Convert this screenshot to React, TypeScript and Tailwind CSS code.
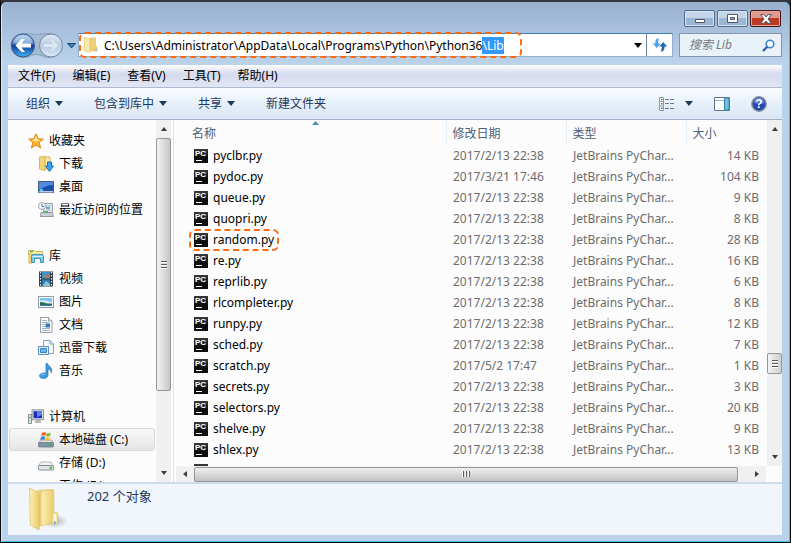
import { useEffect, useRef } from 'react';

const PATH = 'C:\\Users\\Administrator\\AppData\\Local\\Programs\\Python\\Python36\\Lib';

const FILES = [
  { name: 'pyclbr.py', date: '2017/2/13 22:38', size: '14 KB' },
  { name: 'pydoc.py', date: '2017/3/21 17:46', size: '104 KB' },
  { name: 'queue.py', date: '2017/2/13 22:38', size: '9 KB' },
  { name: 'quopri.py', date: '2017/2/13 22:38', size: '8 KB' },
  { name: 'random.py', date: '2017/2/13 22:38', size: '28 KB', marked: true },
  { name: 're.py', date: '2017/2/13 22:38', size: '16 KB' },
  { name: 'reprlib.py', date: '2017/2/13 22:38', size: '6 KB' },
  { name: 'rlcompleter.py', date: '2017/2/13 22:38', size: '8 KB' },
  { name: 'runpy.py', date: '2017/2/13 22:38', size: '12 KB' },
  { name: 'sched.py', date: '2017/2/13 22:38', size: '7 KB' },
  { name: 'scratch.py', date: '2017/5/2 17:47', size: '1 KB' },
  { name: 'secrets.py', date: '2017/2/13 22:38', size: '3 KB' },
  { name: 'selectors.py', date: '2017/2/13 22:38', size: '20 KB' },
  { name: 'shelve.py', date: '2017/2/13 22:38', size: '9 KB' },
  { name: 'shlex.py', date: '2017/2/13 22:38', size: '13 KB' },
  { name: '', date: '', size: '' },
];

const Svg = ({ children, size = 16 }) => (
  <svg width={size} height={size} viewBox="0 0 16 16" fill="none" className="shrink-0" aria-hidden="true">
    {children}
  </svg>
);

const StarIcon = () => (
  <Svg>
    <path d="M8 .8l2 5 5.3.3-4.1 3.5 1.4 5.4L8 12l-4.6 3 1.4-5.4L.7 6.1 6 5.8z" fill="#ffb638" stroke="#e08414" />
    <path d="M8 3l1.300 3.600 3.500.3L8 8.400 3.200 6.900l3.500-.3z" fill="#ffe9a0" />
  </Svg>
);

const DownloadIcon = () => (
  <Svg>
    <path d="M1.500 1l5.500-.5v14L1.500 13z" fill="#f3d679" stroke="#d8b65a" />
    <path d="M7 1h5v12H7z" fill="#fbeaa9" stroke="#d8b65a" />
    <path d="M9.500 6h4v4h2l-4 5.500L7.500 10h2z" fill="#3ba5ea" stroke="#1b6fb5" />
  </Svg>
);

const DesktopIcon = () => (
  <Svg>
    <rect x=".5" y="2.500" width="15" height="11" fill="#1f4fae" stroke="#4b5f80" />
    <path d="M1 3h14v3C10 6 5 8 1 11z" fill="#4f8ce0" />
    <path d="M1 12h14v1.500H1z" fill="#b8cbe4" />
    <path d="M2 10h3v2H2z" fill="#55c7f5" />
  </Svg>
);

const RecentIcon = () => (
  <Svg>
    <path d="M5.500 1.500h9v9h-9z" fill="#e4eaef" stroke="#98a4b0" />
    <path d="M3 10.500h11l1.500 4h-13z" fill="#c9d0d6" stroke="#8e99a4" />
    <path d="M8 4h5M8 8h5" stroke="#a9b6c2" />
    <path d="M8 6h4" stroke="#4a95cf" strokeWidth="1.500" />
    <path d="M6 10h4" stroke="#3ca552" strokeWidth="1.500" />
    <circle cx="4" cy="4" r="3.500" fill="#f5f8fb" stroke="#98a4b0" />
    <path d="M4 2v2.500h2" stroke="#65707c" />
  </Svg>
);

const LibraryIcon = () => (
  <Svg>
    <path d="M.5 2.500h6l1 1h7v3h-14z" fill="#fbe9a2" stroke="#d4b65c" />
    <path d="M2 3.500h3" stroke="#53b452" strokeWidth="1.500" />
    <path d="M1 6h3v9H1z" fill="#f6d775" stroke="#d4b65c" />
    <path d="M3.500 14.500v-6q0-2 2-2h8q2 0 2 2v6h-3v-4h-6v4z" fill="#82cbe9" stroke="#3c93ba" />
    <path d="M4.500 8.500h10" stroke="#d6f1fb" />
  </Svg>
);

const VideoIcon = () => (
  <Svg>
    <path d="M1 .5h14v15H1z" fill="#2f3a42" />
    <path d="M4 1h8v6.500H4z" fill="#3a93cd" />
    <path d="M4 8.500h8V15H4z" fill="#2c7bb8" />
    <path d="M4 2l4 3 4-2v3L8 7.500z" fill="#c4744d" />
    <path d="M5 14l3-4 4 3v2H5z" fill="#81c5d9" />
    <path d="M2.500 1v14M13.500 1v14" stroke="#e8eef2" strokeWidth="1.200" strokeDasharray="1.500 1.500" />
  </Svg>
);

const PictureIcon = () => (
  <Svg>
    <rect x=".5" y="2.500" width="15" height="11" fill="#fff" stroke="#8e9aa5" />
    <path d="M2 4h12v8H2z" fill="#7cc4ee" />
    <path d="M2 7c4-2 8 1 12 1v2H2z" fill="#d9eef5" />
    <path d="M2 8c3-.5 6 2 12 1.500V12H2z" fill="#2c6c58" />
    <path d="M2 11h12v1H2z" fill="#317fb5" />
  </Svg>
);

const DocumentIcon = () => (
  <Svg>
    <path d="M2.500.5h8l3.500 3.500v11.500H2.500z" fill="#fff" stroke="#929ca6" />
    <path d="M10.500.5V4H14" fill="#e8edf1" stroke="#929ca6" />
    <path d="M4 3.500h5M4 5.500h7M4 7.500h3M4 9.500h3M4 11.500h8M4 13.500h8" stroke="#9db0c0" />
    <path d="M7.500 6.500h4.500v4H7.500z" fill="#3678bd" />
  </Svg>
);

const ThunderIcon = () => (
  <Svg>
    <path d="M5.500.5H12L15.500 4v9.500h-10z" fill="#f4f9fd" stroke="#7fa2c0" />
    <path d="M12 .5V4h3.500" stroke="#7fa2c0" />
    <path d="M.5 6.500h10v8H.5z" fill="#e3f1fb" stroke="#5c8fc0" />
    <path d="M2.500 8.500h6v4h-6z" fill="#62b5ed" stroke="#3b83c4" />
  </Svg>
);

const MusicIcon = () => (
  <Svg>
    <path d="M8 .5h1.500c.5 2.500 5.500 3.500 3.800 9.300-.3-2-1.300-3.300-3.300-3.800V12c0 2-2 3.500-4.500 3.500S1.200 14 1.500 12.500C2 10.500 5 9.500 8 10.200z" fill="#3b9ee5" stroke="#1e6eb3" strokeWidth=".7" />
    <path d="M3 12.500c.8-1 2-1.500 3.500-1.300" stroke="#a9dbfa" />
  </Svg>
);

const ComputerIcon = () => (
  <Svg>
    <path d="M.5 5.500h3v9h-3z" fill="#d9dde0" stroke="#8b9197" />
    <path d="M1 8.500h2" stroke="#4fb848" />
    <path d="M4 .8h11.500v10H4z" fill="#dfe2e5" stroke="#8b9197" />
    <path d="M5.500 2.200h8.500v7H5.500z" fill="#1c2fbb" />
    <path d="M9 2.200h5V6L9 8z" fill="#5c84ee" />
    <path d="M8 11h4l1.500 3H6.500z" fill="#b4b9be" />
  </Svg>
);

const DriveIcon = ({ windows = false }) => (
  <Svg>
    {windows ? (
      <path d="M2.500 8h11l2 3.500H.5z" fill="#dfe6ea" stroke="#8b99a4" strokeWidth=".8" />
    ) : (
      <path d="M3 7h10l2.500 3.500H.5z" fill="#f1f2f3" stroke="#a5a9ad" strokeWidth=".8" />
    )}
    <rect x=".5" y="10.500" width="15" height="4.500" rx="1" fill={windows ? '#7b95a6' : '#e3e5e6'} stroke="#6f777e" strokeWidth=".8" />
    <path d="M11.500 12.800h2.500" stroke="#35b83a" strokeWidth="2" />
    {windows && (
      <>
        <path d="M4 .8Q6-.4 8.200.6L7.400 3.800Q5.200 2.800 3.200 4z" fill="#ee5a24" />
        <path d="M8.900.9q2 .9 4-.2L12 4q-2 .9-4 .1z" fill="#7cbc2c" />
        <path d="M3 4.800Q5.200 3.600 7.200 4.800L6.400 8Q4.200 7 2.200 8.100z" fill="#3a86d8" />
        <path d="M7.900 5q2 .9 4-.1L11.200 8.300q-2 .8-4 0z" fill="#fcc419" />
      </>
    )}
  </Svg>
);

const PyIcon = () => (
  <svg width="14" height="14" viewBox="0 0 14 14" className="shrink-0" aria-hidden="true">
    <defs>
      <linearGradient id="py" x2="0" y2="1">
        <stop offset="0" stopColor="#3a3a3a" />
        <stop offset=".6" stopColor="#0e0e0e" />
      </linearGradient>
    </defs>
    <rect width="14" height="14" fill="url(#py)" />
    <text x="1" y="7" fontSize="8" fontWeight="700" fill="#fff" className="font-['Liberation_Sans',sans-serif]">PC</text>
    <path d="M2 11.500h6" stroke="#fff" />
  </svg>
);

const FolderIcon = ({ className }) => (
  <svg viewBox="0 0 40 46" className={className} aria-hidden="true">
    <defs>
      <linearGradient id="folder" x1="0" x2="1">
        <stop offset="0" stopColor="#fdf0b4" />
        <stop offset="1" stopColor="#e9cc6b" />
      </linearGradient>
      <radialGradient id="shade">
        <stop offset="0" stopColor="#7e8894" stopOpacity=".6" />
        <stop offset="1" stopColor="#7e8894" stopOpacity="0" />
      </radialGradient>
    </defs>
    <ellipse cx="27" cy="35" rx="13" ry="7" fill="url(#shade)" />
    <path d="M9 3l16-1 1 24 3 1v10l-18 3z" fill="#ecd37b" />
    <path d="M13 4l13-1v33l-13 4z" fill="url(#folder)" stroke="#dcc069" strokeWidth=".6" />
    <path d="M1 1l10 5v38L2 39z" fill="url(#folder)" stroke="#d6b95c" strokeWidth=".6" />
    <path d="M24 28q3-4 6-1v10l-6 1z" fill="#f7e596" stroke="#d6b95c" strokeWidth=".6" />
    <path d="M27 28v7" stroke="#fff" strokeWidth="1.500" />
    <path d="M27 35v3" stroke="#54a8da" strokeWidth="1.500" />
  </svg>
);

const SmallFolderIcon = () => (
  <svg width="14" height="16" viewBox="0 0 14 16" className="ml-[5px] shrink-0" aria-hidden="true">
    <path d="M6 1h5.500v13H6z" fill="#ecd180" stroke="#dcc069" strokeWidth=".6" />
    <path d="M.5.500L6 2v13.500L.5 14z" fill="#fae9a6" stroke="#d9bd62" strokeWidth=".6" />
    <path d="M10.500 9.500h2.500v4.500h-2.500z" fill="#f7e596" stroke="#d6b95c" strokeWidth=".6" />
    <path d="M12 11.500v2" stroke="#54a8da" />
  </svg>
);

const Caret = ({ className = '' }) => (
  <svg width="8" height="5" viewBox="0 0 8 5" className={`shrink-0 fill-current ${className}`} aria-hidden="true">
    <path d="M0 0h8L4 5z" />
  </svg>
);

const NAV = [
  [
    { label: '收藏夹', icon: <StarIcon /> },
    { label: '下载', icon: <DownloadIcon /> },
    { label: '桌面', icon: <DesktopIcon /> },
    { label: '最近访问的位置', icon: <RecentIcon /> },
  ],
  [
    { label: '库', icon: <LibraryIcon /> },
    { label: '视频', icon: <VideoIcon /> },
    { label: '图片', icon: <PictureIcon /> },
    { label: '文档', icon: <DocumentIcon /> },
    { label: '迅雷下载', icon: <ThunderIcon /> },
    { label: '音乐', icon: <MusicIcon /> },
  ],
  [
    { label: '计算机', icon: <ComputerIcon /> },
    { label: '本地磁盘 (C:)', icon: <DriveIcon windows />, active: true },
    { label: '存储 (D:)', icon: <DriveIcon /> },
    { label: '工作 (E:)', icon: <DriveIcon /> },
  ],
];

const WindowButtons = () => (
  <div className="flex justify-end gap-0.5 pr-px">
    <button aria-label="最小化" className="flex h-[17px] w-[31px] items-center justify-center rounded-xs border border-[#56698a] bg-linear-to-b from-[#c3d5e9] from-50% to-[#9cb7d3] to-50% shadow-[inset_0_0_0_1px_#d5e4f3]">
      <svg width="12" height="13" viewBox="0 0 12 13"><path d="M1.500 7.500h9v3h-9z" fill="#fff" stroke="#535666" /></svg>
    </button>
    <button aria-label="最大化" className="flex h-[17px] w-[31px] items-center justify-center rounded-xs border border-[#56698a] bg-linear-to-b from-[#c3d5e9] from-50% to-[#9cb7d3] to-50% shadow-[inset_0_0_0_1px_#d5e4f3]">
      <svg width="11" height="9" viewBox="0 0 11 9"><path d="M.5.5h10v8H.5z" fill="#fff" stroke="#535666" /><path d="M3.500 3.500h4v2h-4z" fill="#9cb7d3" stroke="#535666" /></svg>
    </button>
    <button aria-label="关闭" className="flex h-[17px] w-[31px] items-center justify-center rounded-xs border border-[#43141a] bg-linear-to-b from-[#dd9a8e] from-50% to-[#bd3a22] to-50% shadow-[inset_0_0_0_1px_#e3a79b]">
      <svg width="12" height="10" viewBox="0 0 12 10"><path d="M.7.7h3.400L6 3 7.900.7h3.400L8 5l3.300 4.300H7.900L6 7 4.100 9.300H.7L4 5z" fill="#fff" stroke="#535666" /></svg>
    </button>
  </div>
);

const NavButtons = () => (
  <svg width="70" height="28" viewBox="0 0 70 28" className="shrink-0" aria-hidden="true">
    <defs>
      <linearGradient id="back" x2="0" y2="1">
        <stop offset="0" stopColor="#a9cdf0" />
        <stop offset=".45" stopColor="#3d72c1" />
        <stop offset=".5" stopColor="#12399a" />
        <stop offset="1" stopColor="#3fb5f2" />
      </linearGradient>
      <linearGradient id="fwd" x2="0" y2="1">
        <stop offset="0" stopColor="#e0eaf4" />
        <stop offset=".5" stopColor="#b9cde2" />
        <stop offset="1" stopColor="#d9e8f6" />
      </linearGradient>
    </defs>
    <path d="M15 2.500c8 0 8 1 13.500 1s5.500-1 13.500-1a12 12 0 010 24c-8 0-8-3-13.500-3S23 26.500 15 26.500a12 12 0 010-24z" fill="#a3bad4" stroke="#849fbd" />
    <circle cx="15" cy="14.500" r="11.500" fill="url(#back)" stroke="#3e5684" />
    <path d="M5 11.500a10.500 10.500 0 0120 0q-10 4-20 0z" fill="#fff" opacity=".35" />
    <path d="M7.500 14.500l6-6.500H17l-3.500 4.500H23v4h-9.500L17 21h-3.500z" fill="#fff" />
    <circle cx="43" cy="14.500" r="11.500" fill="url(#fwd)" stroke="#7389a6" />
    <path d="M50.500 14.500l-6-6.500H41l3.500 4.500H35v4h9.500L41 21h3.500z" fill="#dbe7f2" stroke="#b2c5d9" strokeWidth=".6" />
    <path d="M59.500 12.500h8l-4 4.500z" fill="#2e86c2" stroke="#22466f" />
  </svg>
);

const AddressBar = () => {
  const ref = useRef<HTMLInputElement>(null);

  useEffect(() => {
    ref.current?.focus();
    ref.current?.setSelectionRange(PATH.length - 4, PATH.length);
  }, []);

  return (
    <div className="relative flex h-6 flex-1 items-center border border-[#8fb0cf] border-t-[#3f7cae] bg-white">
      <SmallFolderIcon />
      <input
        ref={ref}
        aria-label="地址"
        defaultValue={PATH}
        className="ml-1.5 min-w-0 flex-1 bg-transparent leading-[17px] text-black outline-none selection:bg-[#3399ff] selection:text-white"
      />
      <button aria-label="历史记录" className="px-1 text-black"><Caret /></button>
      <button aria-label="刷新" className="flex h-full w-[26px] items-center justify-center border-l border-[#6f8299]">
        <svg width="16" height="16" viewBox="0 0 16 16">
          <path d="M6.800 1.200C3.500 1.500 3.300 4 3.300 6.500H.8L4.800 11l4-4.500H6.200c0-2 0-3.800.6-5.300z" fill="#4aa3e3" />
          <path d="M8.700 14.800c3.300-.3 3.900-2.800 3.900-5.300h2.600l-4-4.500-4 4.500h2.600c0 2-.5 3.800-1.100 5.300z" fill="#2767b0" />
        </svg>
      </button>
      <span className="pointer-events-none absolute -top-0.5 left-0 h-[26px] w-[443px] rounded-md border-2 border-dashed border-[#ff6a0c]" />
    </div>
  );
};

const Toolbar = () => (
  <div className="flex h-8 shrink-0 items-center gap-[31px] border-b border-[#a0afc3] bg-linear-to-b from-[#fafdff] via-[#e6f0fa] via-50% to-[#dce6f4] pr-[15px] pl-[18px] text-[#1e395b]">
    <button className="flex items-center gap-[5px]">组织<Caret /></button>
    <button className="flex items-center gap-[5px]">包含到库中<Caret /></button>
    <button className="flex items-center gap-[5px]">共享<Caret /></button>
    <button>新建文件夹</button>
    <div className="ml-auto flex items-center gap-[21px]">
      <button aria-label="更改视图" className="flex items-center gap-2.5">
        <svg width="16" height="14" viewBox="0 0 16 14">
          <path d="M.5.5h4v13h-4z" fill="#fff" stroke="#8f9bab" />
          <path d="M1 4.500h3M1 9h3" stroke="#8f9bab" />
          <path d="M2 2.500h1.500" stroke="#2d7d46" strokeWidth="1.500" />
          <path d="M2 6.800h1.500" stroke="#d0421b" strokeWidth="1.500" />
          <path d="M2 11.300h1.500" stroke="#2f6ab5" strokeWidth="1.500" />
          <path d="M6 2.500h10M6 6.500h10M6 11.500h10" stroke="#6c7c92" strokeDasharray="4 1" />
        </svg>
        <Caret />
      </button>
      <button aria-label="预览窗格">
        <svg width="16" height="14" viewBox="0 0 16 14">
          <path d="M.5.5h15v13H.5z" fill="#fff" stroke="#5c7390" />
          <path d="M1 3.500h9" stroke="#9fb0c4" />
          <path d="M10.500 1v12h4.500V1z" fill="#6fc0dd" stroke="#3c87a8" />
        </svg>
      </button>
      <button aria-label="帮助">
        <svg width="16" height="16" viewBox="0 0 16 16">
          <circle cx="8" cy="8" r="7.200" fill="#2546b0" stroke="#8b929c" strokeWidth="1.500" />
          <path d="M2.500 7a5.500 5.500 0 0111 0q-5 2-11 0z" fill="#6b8de0" opacity=".7" />
          <text x="8" y="12" fontSize="12" fontWeight="700" textAnchor="middle" fill="#fff" className="font-['Liberation_Sans',sans-serif]">?</text>
        </svg>
      </button>
    </div>
  </div>
);

const Sidebar = () => (
  <nav className="flex w-[166px] shrink-0 border-r border-[#d6e5f5]">
    <div className="min-w-0 flex-1 space-y-[23px] overflow-hidden pt-[9px] pl-px">
      {NAV.map((group) => (
        <div key={group[0].label}>
          {group.map((item, i) => (
            <button
              key={item.label}
              className={`flex h-[23px] w-[146px] items-center gap-[5px] rounded-[3px] border whitespace-nowrap ${
                i === 0 ? 'pl-[18px]' : 'pl-7'
              } ${item.active ? 'border-[#d9d9d9] bg-linear-to-b from-[#f8f8f8] to-[#e5e5e5]' : 'border-transparent'}`}
            >
              {item.icon}
              {item.label}
            </button>
          ))}
        </div>
      ))}
    </div>
    <div className="mr-0.5 flex w-[15px] flex-col items-center bg-[#f0f0f0]">
      <Arrow className="my-[6px] rotate-180" />
      <div className="flex h-[253px] w-full items-center justify-center rounded-xs border border-[#979797] bg-linear-to-r from-[#f3f3f3] to-[#c6c6c8]">
        <Grip />
      </div>
      <Arrow className="mt-auto mb-1.5" />
    </div>
  </nav>
);

const Arrow = ({ className = '' }) => (
  <svg width="6" height="6" viewBox="0 0 6 6" className={`shrink-0 ${className}`} aria-hidden="true">
    <path d="M0 1h6L3 5z" fill="#3c3c3c" />
  </svg>
);

const Grip = ({ className = '' }) => (
  <svg width="8" height="8" viewBox="0 0 8 8" className={className} aria-hidden="true">
    <path d="M1 .5h6M1 3.500h6M1 6.500h6" stroke="#5a5a5a" />
    <path d="M1 1.500h6M1 4.500h6M1 7.500h6" stroke="#fff" />
  </svg>
);

const FileTable = () => (
  <table className="w-full table-fixed border-collapse text-left whitespace-nowrap">
    <thead>
      <tr className="h-[25px] text-[#4c607a]">
        <th className="relative pt-0.5 pb-0 pl-1.5 font-normal">
          名称
          <svg width="7" height="4" viewBox="0 0 7 4" className="absolute top-px left-1/2 -ml-1" aria-hidden="true">
            <path d="M0 4l3.500-4L7 4z" fill="#4a90b8" />
          </svg>
        </th>
        {['修改日期', '类型'].map((title) => (
          <th key={title} className="w-[120px] border-l border-[#e3edf7] pt-0.5 pb-0 pl-1.5 font-normal">{title}</th>
        ))}
        <th className="w-[81px] border-l border-[#e3edf7] pt-0.5 pb-0 pl-1.5 font-normal">大小</th>
      </tr>
    </thead>
    <tbody>
      {FILES.map((file) => (
        <tr key={file.name} className="h-[21px] text-[#6d6d6d]">
          <td className="py-0 pl-2 text-black">
            <div className="relative flex w-fit items-center gap-[5px]">
              <PyIcon />
              {file.name}
              {file.marked && (
                <span className="absolute -inset-x-[5px] -inset-y-[3px] rounded-md border-2 border-dashed border-[#ff6a0c]" />
              )}
            </div>
          </td>
          <td className="py-0 pl-[7px]">{file.date}</td>
          <td className="py-0 pl-[7px]">{file.name && 'JetBrains PyChar...'}</td>
          <td className="py-0 pr-2 text-right">{file.size}</td>
        </tr>
      ))}
    </tbody>
  </table>
);

const FilePane = () => (
  <main className="flex min-w-0 flex-1 flex-col">
    <div className="flex min-h-0 flex-1">
      <div className="min-w-0 flex-1 overflow-hidden pl-3">
        <FileTable />
      </div>
      <div className="flex w-[15px] flex-col items-center bg-[#f0f0f0]">
        <Arrow className="my-1.5 rotate-180" />
        <div className="mt-auto flex h-[21px] w-full items-center justify-center rounded-xs border border-[#979797] bg-linear-to-r from-[#f3f3f3] to-[#cfcfd1]">
          <Grip />
        </div>
        <Arrow className="mt-20 mb-1.5" />
      </div>
    </div>
    <div className="mr-4 ml-0.5 flex h-4 shrink-0 items-center bg-[#f0f0f0]">
      <Arrow className="mx-1.5 rotate-90" />
      <div className="flex h-[15px] flex-1 items-center justify-center rounded-xs border border-[#979797] bg-linear-to-b from-[#f0f0f0] to-[#c2c2c4]">
        <Grip className="rotate-90" />
      </div>
      <Arrow className="mr-1.5 ml-4 -rotate-90" />
    </div>
  </main>
);

export default function App() {
  return (
    <div className="h-screen border border-t-2 border-[#0b0b0f] border-t-[#33353f] bg-[#33353f] font-['Noto_Sans','Noto_Sans_CJK_SC',sans-serif] text-[12px] leading-4 text-black">
      <div className="flex h-full flex-col rounded-t-md border border-t-0 border-[#3cc3e0] border-l-[#dbe9f6] bg-[#bbd2eb] bg-linear-to-b from-[#98b1cf] to-[#bbd2eb] to-[60px] pt-2 pr-[7px] pb-1.5 pl-1.5">
        <WindowButtons />
        <div className="mt-1 mb-1.5 flex items-center">
          <NavButtons />
          <AddressBar />
          <label className="ml-1.5 flex h-6 w-[103px] items-center border border-[#8195ad] bg-[#e9f1f9] pr-1.5 pl-[9px]">
            <input
              type="search"
              aria-label="搜索 Lib"
              placeholder="搜索 Lib"
              className="w-full min-w-0 italic outline-none placeholder:text-[#74797f]"
            />
            <svg width="13" height="13" viewBox="0 0 13 13" className="shrink-0">
              <circle cx="8" cy="5" r="3.800" fill="#f4faff" stroke="#3f84c8" strokeWidth="1.600" />
              <path d="M5.200 7.800L1 12" stroke="#2a5aa5" strokeWidth="2.200" />
            </svg>
          </label>
        </div>

        <div className="flex h-[23px] shrink-0 items-center gap-[17px] border-b border-[#b0b9d3] bg-linear-to-b from-white via-[#d5daed] via-40% to-[#e2e6f3] pl-2.5">
          <button>文件(F)</button>
          <button>编辑(E)</button>
          <button>查看(V)</button>
          <button>工具(T)</button>
          <button>帮助(H)</button>
        </div>
        <Toolbar />

        <div className="flex min-h-0 flex-1 bg-[#fcfcfc]">
          <Sidebar />
          <FilePane />
        </div>

        <footer className="flex h-[53px] shrink-0 border-t-2 border-[#cfdbed] bg-[#f1f5fc] pl-5">
          <FolderIcon className="mt-[3px] h-[45px] w-10" />
          <span className="mt-1 ml-[19px] text-[13px] text-[#1e395b]">202 个对象</span>
        </footer>
      </div>
    </div>
  );
}
